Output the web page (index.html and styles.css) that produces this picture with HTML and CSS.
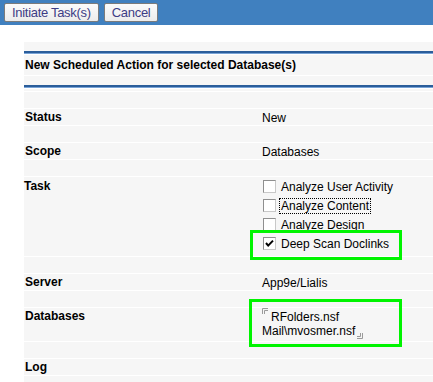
FILE: index.html
```
<!DOCTYPE html>
<html>
<head>
<meta charset="utf-8">
<link rel="stylesheet" href="styles.css">
</head>
<body>
<div class="toolbar">
  <button class="btn">Initiate Task(s)</button>
  <button class="btn">Cancel</button>
</div>
<div class="panel">
  <div class="pad"></div>
  <div class="rule"></div>
  <div class="title">New Scheduled Action for selected Database(s)</div>
  <div class="pad"></div>
  <div class="rule"></div>
  <div class="gap"></div>

  <div class="row"></div>
  <div class="row"><div class="label">Status</div><div class="value">New</div></div>
  <div class="row"></div>
  <div class="row"><div class="label">Scope</div><div class="value">Databases</div></div>
  <div class="row"></div>
  <div class="row task">
    <div class="label tasklabel">Task</div>
    <div class="value checks">
      <div class="check"><span class="box"></span><span class="ctext">Analyze User Activity</span></div>
      <div class="check"><span class="box"></span><span class="ctext focus">Analyze Content</span></div>
      <div class="check"><span class="box"></span><span class="ctext">Analyze Design</span></div>
      <div class="check"><span class="box"><svg width="11" height="11" viewBox="0 0 11 11"><path d="M2 5 L4.2 7.6 L9 2.6" stroke="#000" stroke-width="2" fill="none"/></svg></span><span class="ctext">Deep Scan Doclinks</span></div>
      <div class="hl hl-task"></div>
    </div>
  </div>
  <div class="row"></div>
  <div class="row"><div class="label">Server</div><div class="value">App9e/Lialis</div></div>
  <div class="row"></div>
  <div class="row dbrow">
    <div class="label">Databases</div>
    <div class="value dbs">
      <div class="dbline"><svg class="mk-tl" width="6" height="6" viewBox="0 0 6 6"><path d="M0.5 6V0.5H6M2.5 6V2.5H6" stroke="#9a9a9a" fill="none"/></svg><span class="first">RFolders.nsf</span></div>
      <div class="dbline">Mail\mvosmer.nsf<svg class="mk-br" width="6" height="6" viewBox="0 0 6 6"><path d="M0 5.5H5.5V0M0 3.5H3.5V0" stroke="#9a9a9a" fill="none"/></svg></div>
      <div class="hl hl-db"></div>
    </div>
  </div>
  <div class="row"></div>
  <div class="row"><div class="label">Log</div><div class="value"></div></div>
  <div class="row"></div>
</div>
</body>
</html>
```
FILE: styles.css
```
html, body {
  margin: 0;
  padding: 0;
  background: #fff;
  font-family: "Liberation Sans", Arial, sans-serif;
  font-size: 12px;
  color: #000;
  overflow: hidden;
}
.toolbar {
  height: 25px;
  background: #4080bf;
  box-sizing: border-box;
  padding: 3px 4px 0 4px;
  display: flex;
  gap: 5px;
  align-items: flex-start;
}
.btn {
  height: 19px;
  margin: 0;
  padding: 0 7px;
  font-family: "Liberation Sans", Arial, sans-serif;
  font-size: 13px;
  letter-spacing: -0.3px;
  line-height: 17px;
  color: #3d3d85;
  background: linear-gradient(#fbfbfb, #ececec);
  border: 1px solid #7b7b7b;
  border-radius: 2px;
}
.panel {
  margin: 17px 0 0 24px;
  background: #f6f6f6;
}
.pad {
  height: 9px;
}
.rule {
  height: 4px;
  background: linear-gradient(#2a5d9a 0, #2a5d9a 2px, #78a3d6 2px, #78a3d6 3px, #fff 3px, #fff 4px);
}
.title {
  height: 20px;
  line-height: 20px;
  font-weight: bold;
  padding-left: 1px;
  border-bottom: 1px solid #fff;
}
.gap {
  height: 2px;
  border-bottom: 1px solid #fff;
}
.row {
  height: 16px;
  border-bottom: 1px solid #fff;
  display: grid;
  grid-template-columns: 238px 1fr;
  line-height: 16px;
}
.label {
  font-weight: bold;
  padding-left: 1px;
}
.value {
  padding-top: 1px;
  position: relative;
}
.task {
  height: 79px;
}
.tasklabel {
  line-height: 19px;
  padding-left: 0;
}
.checks {
  padding-top: 0;
}
.check {
  height: 19px;
  display: flex;
  align-items: center;
}
.box {
  width: 13px;
  height: 13px;
  box-sizing: border-box;
  margin-left: 1px;
  border: 1px solid #8f8f8f;
  border-bottom-color: #c8c8c8;
  border-right-color: #c8c8c8;
  background: #fff;
  display: flex;
  align-items: center;
  justify-content: center;
}
.box svg {
  display: block;
}
.ctext {
  margin-left: 5px;
  line-height: 14px;
  padding: 0 1px 0 0;
}
.focus {
  outline: 1px dotted #000;
  outline-offset: 0;
  margin-left: 4px;
  padding-left: 1px;
}
.dbrow {
  height: 33px;
}
.dbs {
  padding-top: 2px;
}
.dbline {
  line-height: 14px;
  display: flex;
  align-items: flex-start;
}
.mk-tl {
  margin-top: -2px;
  margin-right: 3px;
}
.mk-br {
  margin-top: 9px;
  margin-left: 2px;
}
.hl {
  position: absolute;
  box-sizing: border-box;
  border: 3px solid #00f400;
}
.hl-task {
  left: -12px;
  top: 53px;
  width: 152px;
  height: 30px;
}
.hl-db {
  left: -13px;
  top: -9px;
  width: 153px;
  height: 48px;
}
```
